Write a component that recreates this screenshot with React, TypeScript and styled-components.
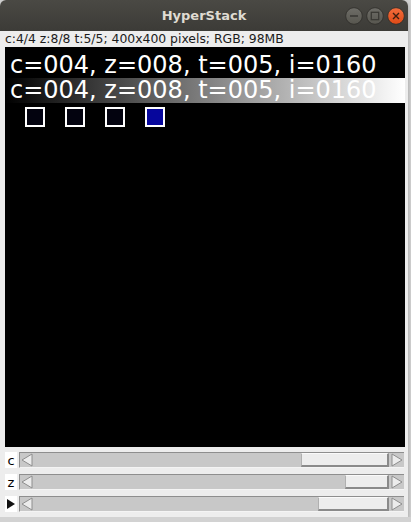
import React from 'react';
import styled, { createGlobalStyle } from 'styled-components';

const GlobalStyle = createGlobalStyle`
  html, body {
    margin: 0;
    padding: 0;
    background: #d2d2d2;
    font-family: "DejaVu Sans", "Liberation Sans", sans-serif;
  }
`;

const Window = styled.div`
  width: 408px;
  background: #ededed;
  border-radius: 6px 6px 0 0;
  overflow: hidden;
  box-shadow: 0 2px 4px rgba(0, 0, 0, 0.25);
  padding-bottom: 5px;
`;

const TitleBar = styled.div`
  height: 31px;
  display: grid;
  grid-template-columns: 1fr auto 1fr;
  align-items: center;
  background: linear-gradient(#4a4944, #3c3b37);
  padding-right: 3px;
`;

const Title = styled.div`
  grid-column: 2;
  color: #dfdbd2;
  font-weight: bold;
  font-size: 13px;
  padding-left: 3px;
`;

const WindowButtons = styled.div`
  justify-self: end;
  display: flex;
  gap: 3px;
  align-items: center;
`;

const Status = styled.div`
  height: 16px;
  line-height: 16px;
  font-size: 12.4px;
  color: #1c1c1c;
  padding-left: 5px;
  white-space: nowrap;
`;

const Canvas = styled.div`
  margin-left: 5px;
  width: 400px;
  height: 400px;
  background: #000;
  padding-top: 6px;
  box-sizing: border-box;
`;

const Overlay = styled.div<{ $fade?: boolean }>`
  height: 25px;
  line-height: 25px;
  font-size: 24px;
  color: #fff;
  padding-left: 5px;
  white-space: nowrap;
  background: ${(p) => (p.$fade ? 'linear-gradient(to right, #000, #fff)' : 'transparent')};
`;

const Swatches = styled.div`
  display: flex;
  gap: 20px;
  padding: 4px 0 0 20px;
`;

const Swatch = styled.div<{ $on?: boolean }>`
  width: 20px;
  height: 20px;
  box-sizing: border-box;
  border: 2px solid #fff;
  background: ${(p) => (p.$on ? '#06069c' : '#03030f')};
`;

const Sliders = styled.div`
  display: flex;
  flex-direction: column;
  gap: 6px;
  padding: 5px 4px 0 5px;
`;

const SliderRow = styled.div`
  display: flex;
  align-items: stretch;
  height: 16px;
  gap: 2px;
`;

const Label = styled.div`
  width: 12px;
  background: #fff;
  color: #000;
  font-size: 13px;
  display: flex;
  align-items: center;
  justify-content: center;
`;

const Scrollbar = styled.div`
  flex: 1;
  display: flex;
  background: #c8c8c8;
  border-top: 1px solid #8e8e8e;
  border-left: 1px solid #8e8e8e;
  border-bottom: 1px solid #f4f4f4;
`;

const ArrowButton = styled.div`
  width: 15px;
  display: flex;
  align-items: center;
  justify-content: center;
`;

const Track = styled.div`
  flex: 1;
  display: flex;
`;

const Spacer = styled.div`
  flex: 1;
`;

const Thumb = styled.div<{ $share: number }>`
  width: ${(p) => p.$share}%;
  box-sizing: border-box;
  background: #ededed;
  border-top: 1px solid #fafafa;
  border-left: 1px solid #b0b0b0;
  border-right: 2px solid #8a8a8a;
  border-bottom: 2px solid #8a8a8a;
`;

const Circle: React.FC<{ close?: boolean; children: React.ReactNode }> = ({ close, children }) => (
  <svg width="18" height="18" viewBox="0 0 18 18">
    <defs>
      <linearGradient id={close ? 'gc' : 'gg'} x1="0" y1="0" x2="0" y2="1">
        <stop offset="0" stopColor={close ? '#f26d3d' : '#6e6d68'} />
        <stop offset="1" stopColor={close ? '#df4a16' : '#57564f'} />
      </linearGradient>
    </defs>
    <circle cx="9" cy="9" r="8.3" fill={`url(#${close ? 'gc' : 'gg'})`} stroke="#2e2d2a" strokeWidth="0.8" />
    {children}
  </svg>
);

const ArrowIcon: React.FC<{ right?: boolean }> = ({ right }) => (
  <svg width="13" height="14" viewBox="0 0 13 14">
    <polygon
      points={right ? '2,1 12,7 2,13' : '11,1 1,7 11,13'}
      fill="#ececec"
      stroke="#8e8e8e"
      strokeWidth="1"
    />
  </svg>
);

const sliders = [
  { label: 'c', n: 4 },
  { label: 'z', n: 8 },
  { label: 'play', n: 5 },
];

const App: React.FC = () => {
  const text = 'c=004, z=008, t=005, i=0160';
  return (
    <>
      <GlobalStyle />
      <Window>
        <TitleBar>
          <Title>HyperStack</Title>
          <WindowButtons>
            <Circle>
              <rect x="5" y="8.2" width="8" height="1.6" fill="#3a3935" />
            </Circle>
            <Circle>
              <rect x="5.3" y="5.3" width="7.4" height="7.4" fill="none" stroke="#3a3935" strokeWidth="1.3" />
            </Circle>
            <Circle close>
              <path d="M6 6 L12 12 M12 6 L6 12" stroke="#3b1e10" strokeWidth="1.4" />
            </Circle>
          </WindowButtons>
        </TitleBar>
        <Status>c:4/4 z:8/8 t:5/5; 400x400 pixels; RGB; 98MB</Status>
        <Canvas>
          <Overlay>{text}</Overlay>
          <Overlay $fade>{text}</Overlay>
          <Swatches>
            <Swatch />
            <Swatch />
            <Swatch />
            <Swatch $on />
          </Swatches>
        </Canvas>
        <Sliders>
          {sliders.map((s) => (
            <SliderRow key={s.label}>
              <Label>
                {s.label === 'play' ? (
                  <svg width="8" height="10" viewBox="0 0 8 10">
                    <polygon points="0,0 8,5 0,10" fill="#111" />
                  </svg>
                ) : (
                  s.label
                )}
              </Label>
              <Scrollbar>
                <ArrowButton>
                  <ArrowIcon />
                </ArrowButton>
                <Track>
                  <Spacer />
                  <Thumb $share={100 / s.n} />
                </Track>
                <ArrowButton>
                  <ArrowIcon right />
                </ArrowButton>
              </Scrollbar>
            </SliderRow>
          ))}
        </Sliders>
      </Window>
    </>
  );
};

export default App;
